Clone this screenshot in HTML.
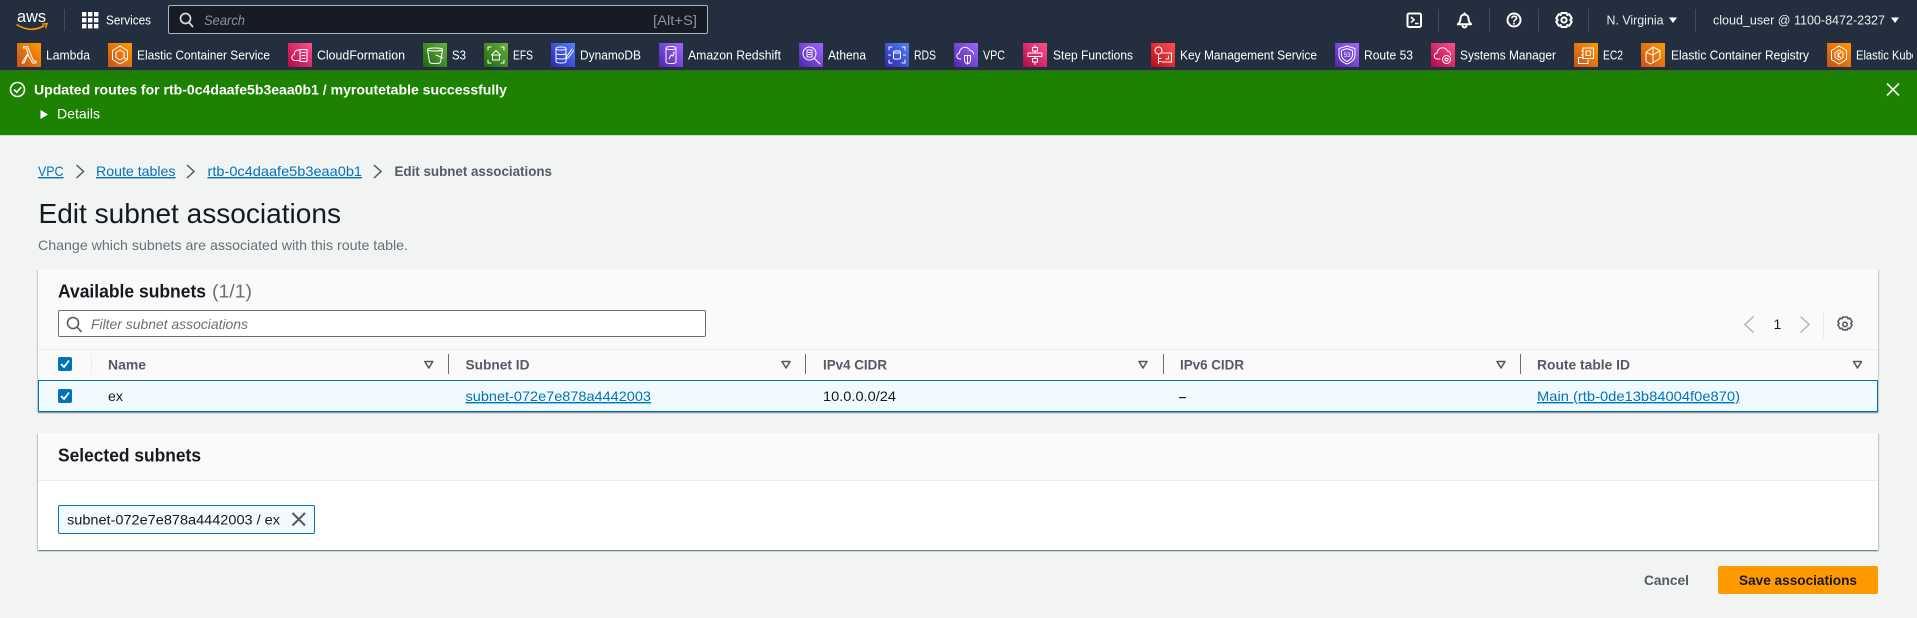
<!DOCTYPE html>
<html lang="en"><head><meta charset="utf-8"><title>Edit subnet associations</title>
<style>
html,body{margin:0;padding:0;width:1917px;height:618px;overflow:hidden;background:#f2f3f3}
body{position:relative;font-family:"Liberation Sans",sans-serif}
.b{position:absolute;box-sizing:border-box}
svg{position:absolute;left:0;top:0}
svg text{font-family:"Liberation Sans",sans-serif}
.n{fill:#fff;font-size:13px}
.s{fill:none;stroke:#fff;stroke-width:1;stroke-linejoin:round;stroke-linecap:round}
.l{fill:#0073bb;font-size:14px;text-decoration:underline}
.h{fill:#545b64;font-size:14px;font-weight:bold}
.t{fill:#16191f;font-size:14px}
.srt{fill:none;stroke:#545b64;stroke-width:1.6;stroke-linejoin:round}
.w{fill:none;stroke:#fff;stroke-width:2;stroke-linejoin:round;stroke-linecap:round}
</style></head><body>
<div class="b" style="left:0;top:0;width:1917px;height:70px;background:#232f3e"></div>
<div class="b" style="left:168px;top:5px;width:540px;height:29px;background:#161b25;border:1px solid #aab7b8;border-radius:2px"></div>
<div class="b" style="left:0;top:70px;width:1917px;height:65px;background:#1d8102;border-top:1px solid #3f5f2c"></div>
<div class="b" style="left:0;top:135px;width:1917px;height:1px;background:#d5dbdb"></div>

<div class="b" style="left:38px;top:269px;width:1840px;height:143px;background:#fafafa;box-shadow:0 1px 1px rgba(0,28,36,.3),1px 1px 1px rgba(0,28,36,.15),-1px 1px 1px rgba(0,28,36,.15)"></div>
<div class="b" style="left:38px;top:349px;width:1840px;height:1px;background:#eaeded"></div>
<div class="b" style="left:58px;top:310px;width:648px;height:27px;background:#fff;border:1px solid #687078;border-radius:2px"></div>
<div class="b" style="left:38px;top:380px;width:1840px;height:32px;background:#f1faff;border:1px solid #0073bb;border-top-width:1.5px;border-bottom-width:1.5px"></div>

<div class="b" style="left:38px;top:433px;width:1840px;height:117px;background:#fff;box-shadow:0 1px 1px rgba(0,28,36,.45),1px 1px 1px rgba(0,28,36,.15),-1px 1px 1px rgba(0,28,36,.15)"></div>
<div class="b" style="left:38px;top:433px;width:1840px;height:48px;background:#fafafa;border-bottom:1px solid #eaeded"></div>
<div class="b" style="left:58px;top:505px;width:257px;height:29px;background:#f1faff;border:1px solid #0073bb;border-radius:2px"></div>
<div class="b" style="left:1718px;top:566px;width:160px;height:28px;background:#ff9900;border-radius:2px"></div>

<svg width="1917" height="618" viewBox="0 0 1917 618" xmlns="http://www.w3.org/2000/svg">
<defs>
<linearGradient id="or" x1="0" y1="1" x2="1" y2="0"><stop offset="0" stop-color="#c8511b"/><stop offset="1" stop-color="#ff9900"/></linearGradient>
<linearGradient id="pk" x1="0" y1="1" x2="1" y2="0"><stop offset="0" stop-color="#b0084d"/><stop offset="1" stop-color="#ff4f8b"/></linearGradient>
<linearGradient id="gr" x1="0" y1="1" x2="1" y2="0"><stop offset="0" stop-color="#1b660f"/><stop offset="1" stop-color="#6cae3e"/></linearGradient>
<linearGradient id="bl" x1="0" y1="1" x2="1" y2="0"><stop offset="0" stop-color="#2e27ad"/><stop offset="1" stop-color="#527fff"/></linearGradient>
<linearGradient id="pu" x1="0" y1="1" x2="1" y2="0"><stop offset="0" stop-color="#4d27a8"/><stop offset="1" stop-color="#a166ff"/></linearGradient>
<linearGradient id="rd" x1="0" y1="1" x2="1" y2="0"><stop offset="0" stop-color="#bd0816"/><stop offset="1" stop-color="#ff5252"/></linearGradient>
</defs>

<!-- aws logo -->
<text x="17" y="22" fill="#fff" font-size="17" textLength="29" lengthAdjust="spacingAndGlyphs">aws</text>
<path d="M16.5 24.5Q31 33.5 44.5 25.5" fill="none" stroke="#f90" stroke-width="1.6"/>
<path d="M42 24.2l5-.6-1.4 4.6" fill="none" stroke="#f90" stroke-width="1.4"/>
<rect x="64" y="9" width="1" height="22" fill="#414d5c"/>
<!-- services grid -->
<g fill="#fff"><rect x="82" y="12" width="4.4" height="4.4"/><rect x="88" y="12" width="4.4" height="4.4"/><rect x="94" y="12" width="4.4" height="4.4"/><rect x="82" y="18" width="4.4" height="4.4"/><rect x="88" y="18" width="4.4" height="4.4"/><rect x="94" y="18" width="4.4" height="4.4"/><rect x="82" y="24" width="4.4" height="4.4"/><rect x="88" y="24" width="4.4" height="4.4"/><rect x="94" y="24" width="4.4" height="4.4"/></g>
<text x="106" y="24.5" class="n" textLength="45" lengthAdjust="spacingAndGlyphs">Services</text>
<!-- search -->
<circle cx="185.5" cy="18.5" r="5" fill="none" stroke="#d5dbdb" stroke-width="1.7"/><path d="M189 22.5l4 4.5" stroke="#d5dbdb" stroke-width="1.7"/>
<text x="204" y="25" fill="#879596" font-size="14" font-style="italic" textLength="41" lengthAdjust="spacingAndGlyphs">Search</text>
<text x="653" y="25" fill="#879596" font-size="14" textLength="44" lengthAdjust="spacingAndGlyphs">[Alt+S]</text>

<!-- right nav -->
<g fill="#414d5c"><rect x="1438" y="9" width="1" height="23"/><rect x="1489" y="8" width="1" height="24"/><rect x="1538" y="9" width="1" height="23"/><rect x="1588" y="9" width="1" height="23"/><rect x="1695" y="9" width="1" height="23"/></g>
<rect x="1407.500" y="13.500" width="13.500" height="13.500" rx="1.500" class="w"/><path d="M1411 17l3 2.800-3 2.800M1415 23.500h3.500" fill="none" stroke="#fff" stroke-width="1.600"/>
<path d="M1457.800 24.200c2-1.500 2.700-3 2.700-5.700a4 4 0 0 1 8 0c0 2.700.7 4.200 2.700 5.700z" class="w"/><path d="M1464.500 13.200v1M1462.500 25.500a2 2 0 0 0 4 0" class="w"/>
<circle cx="1514" cy="20" r="6.500" class="w"/><text x="1510.400" y="24.300" fill="#fff" font-size="12.500" font-weight="bold">?</text>
<path d="M1561.500 13h5l.8 2 2-.8 2.500 4.200-1.600 1.600 1.600 1.600-2.500 4.200-2-.8-.8 2h-5l-.8-2-2 .8-2.500-4.200 1.600-1.600-1.600-1.600 2.500-4.200 2 .8z" class="w" stroke-width="1.800"/><circle cx="1564" cy="20" r="2.600" class="w"/>
<text x="1606.500" y="24.500" class="n" textLength="57" lengthAdjust="spacingAndGlyphs" style="fill:#eaeded">N. Virginia</text>
<path d="M1669 17.500h8l-4 5.500z" fill="#fff"/>
<text x="1713" y="24.500" class="n" textLength="172" lengthAdjust="spacingAndGlyphs" style="fill:#eaeded">cloud_user @ 1100-8472-2327</text>
<path d="M1891 17.500h8l-4 5.500z" fill="#fff"/>

<!-- shortcut row -->
<g transform="translate(17,43)"><rect width="24" height="24" fill="url(#or)"/><path class="s" d="M5 20l6-10-2-5H6.500V3.500h4l6 14.500H19v2h-3.500L11 11.500 7 20z"/></g>
<text x="46" y="59.500" class="n" textLength="44" lengthAdjust="spacingAndGlyphs">Lambda</text>
<g transform="translate(108,43)"><rect width="24" height="24" fill="url(#or)"/><path class="s" d="M12 3l7.500 4.500v9L12 21l-7.500-4.500v-9zM12 7l4 2.500v5l-4 2.500-4-2.500v-5zM16 14.500l2.500 2"/></g>
<text x="137" y="59.500" class="n" textLength="133" lengthAdjust="spacingAndGlyphs">Elastic Container Service</text>
<g transform="translate(288,43)"><rect width="24" height="24" fill="url(#pk)"/><path class="s" d="M11 17.500H7a3 3 0 0 1-.5-6 4 4 0 0 1 5-4.500M12 6.500h7v12h-7zM14 9.500h3M14 12.500h3M14 15.500h3"/></g>
<text x="317" y="59.500" class="n" textLength="88" lengthAdjust="spacingAndGlyphs">CloudFormation</text>
<g transform="translate(423,43)"><rect width="24" height="24" fill="url(#gr)"/><path class="s" d="M4.500 6.500c0-2 15-2 15 0l-2 12.500c-.3 2-10.700 2-11 0zM4.500 6.500c0 2 15 2 15 0M13 12l7 3"/></g>
<text x="452" y="59.500" class="n" textLength="14" lengthAdjust="spacingAndGlyphs">S3</text>
<g transform="translate(484,43)"><rect width="24" height="24" fill="url(#gr)"/><path class="s" d="M4 7V4h3M17 4h3v3M20 17v3h-3M7 20H4v-3M7.500 12L12 7.500l4.500 4.500M8.500 12h7v5h-7z"/></g>
<text x="513" y="59.500" class="n" textLength="20" lengthAdjust="spacingAndGlyphs">EFS</text>
<g transform="translate(551,43)"><rect width="24" height="24" fill="url(#bl)"/><path class="s" d="M5 5.500c0-2 10-2 10 0v13c0 2-10 2-10 0zM5 5.500c0 2 10 2 10 0M5 10c0 2 10 2 10 0M5 14.500c0 2 10 2 10 0M21 6l-5 7-1 3 2.500-1.500 5-7"/></g>
<text x="580" y="59.500" class="n" textLength="61" lengthAdjust="spacingAndGlyphs">DynamoDB</text>
<g transform="translate(659,43)"><rect width="24" height="24" fill="url(#pu)"/><path class="s" d="M7 5c0-2 10-2 10 0v14c0 2-10 2-10 0zM7 5c0 2 10 2 10 0M10 16l2-4 2 1 1-4"/></g>
<text x="688" y="59.500" class="n" textLength="93" lengthAdjust="spacingAndGlyphs">Amazon Redshift</text>
<g transform="translate(799,43)"><rect width="24" height="24" fill="url(#pu)"/><circle class="s" cx="10.500" cy="10.500" r="6.500"/><path class="s" d="M15.500 15.500l5.500 5.500M8 7h5v7H8zM9.500 9.500h2M9.500 11.500h2"/></g>
<text x="828" y="59.500" class="n" textLength="38" lengthAdjust="spacingAndGlyphs">Athena</text>
<g transform="translate(885,43)"><rect width="24" height="24" fill="url(#bl)"/><path class="s" d="M4 7V4h3M17 4h3v3M20 17v3h-3M7 20H4v-3M8.500 9c0-1.500 7-1.500 7 0v6c0 1.500-7 1.500-7 0zM8.500 9c0 1.500 7 1.500 7 0M3.500 12h2M18.500 12h2"/></g>
<text x="914" y="59.500" class="n" textLength="22" lengthAdjust="spacingAndGlyphs">RDS</text>
<g transform="translate(954,43)"><rect width="24" height="24" fill="url(#pu)"/><path class="s" d="M7 16H6a3 3 0 0 1-.5-6A5.500 5.500 0 0 1 16 7.500a3.500 3.500 0 0 1 3.500 3.500M10.500 12.500h6v5c0 2-2 3-3 3.500-1-.5-3-1.500-3-3.500zM13.500 12.500v8"/></g>
<text x="983" y="59.500" class="n" textLength="22" lengthAdjust="spacingAndGlyphs">VPC</text>
<g transform="translate(1023,43)"><rect width="24" height="24" fill="url(#pk)"/><path class="s" d="M9.500 4.500h5v3.500h-5zM5 10h14v3.500H5zM9.500 15.500h5v3.500h-5zM12 8v2M12 13.500v2M12 2.500v2M12 19v2.500"/></g>
<text x="1053" y="59.500" class="n" textLength="80" lengthAdjust="spacingAndGlyphs">Step Functions</text>
<g transform="translate(1151,43)"><rect width="24" height="24" fill="url(#rd)"/><circle class="s" cx="7.500" cy="7.500" r="3.500"/><path class="s" d="M7.500 11v9.500M7.500 15.500H10M7.500 18.500H10M11.500 10h9v9H11M15 16h2.500v-3"/></g>
<text x="1180" y="59.500" class="n" textLength="137" lengthAdjust="spacingAndGlyphs">Key Management Service</text>
<g transform="translate(1335,43)"><rect width="24" height="24" fill="url(#pu)"/><path class="s" d="M12 3l8 2.500v6.500c0 4.500-4 7.500-8 9-4-1.500-8-4.500-8-9V5.500zM12 5.500l5.500 2v4.500c0 3-2.500 5-5.500 6.500-3-1.500-5.500-3.500-5.500-6.500V7.500z"/><text x="8.800" y="14.200" fill="#fff" font-size="6">53</text></g>
<text x="1364" y="59.500" class="n" textLength="49" lengthAdjust="spacingAndGlyphs">Route 53</text>
<g transform="translate(1431,43)"><rect width="24" height="24" fill="url(#pk)"/><path class="s" d="M9 16H6.500a3 3 0 0 1-.5-6A5.500 5.500 0 0 1 16.500 8a3.500 3.500 0 0 1 3 4"/><circle class="s" cx="15.500" cy="16.500" r="4"/><circle class="s" cx="15.500" cy="16.500" r="1.500"/></g>
<text x="1460" y="59.500" class="n" textLength="96" lengthAdjust="spacingAndGlyphs">Systems Manager</text>
<g transform="translate(1574,43)"><rect width="24" height="24" fill="url(#or)"/><path class="s" d="M9 14.500H4.500v6H14V17M9 5h10.500v10.500H9zM12 8h4.500v4.500H12zM7.500 8h1.500M7.500 12h1.500"/></g>
<text x="1603" y="59.500" class="n" textLength="20" lengthAdjust="spacingAndGlyphs">EC2</text>
<g transform="translate(1641,43)"><rect width="24" height="24" fill="url(#or)"/><path class="s" d="M12 4l7 3.500v8L9.500 21 5 18.500v-9zM12 4v8l-7-2.500M12 12l7-4.500M12 12v6.500"/></g>
<text x="1671" y="59.500" class="n" textLength="138" lengthAdjust="spacingAndGlyphs">Elastic Container Registry</text>
<g transform="translate(1827,43)"><rect width="24" height="24" fill="url(#or)"/><path class="s" d="M12 3l7.500 4.500v9L12 21l-7.500-4.500v-9zM12 7l4 2.500v5L12 17l-4-2.500v-5zM11 9.500v5M11 12l2.500-2.500M11 12l2.500 2.500"/></g>
<svg x="1856" y="45" width="57" height="22" viewBox="1856 45 57 22"><text x="1856" y="59.500" class="n" textLength="62" lengthAdjust="spacingAndGlyphs">Elastic Kube</text></svg>

<!-- flash -->
<circle cx="17.500" cy="89.500" r="7" fill="none" stroke="#fff" stroke-width="1.600"/><path d="M14 89.500l2.700 2.700 4.500-5" fill="none" stroke="#fff" stroke-width="1.600"/>
<text x="34" y="94.500" fill="#fff" font-size="14" font-weight="bold" textLength="473" lengthAdjust="spacingAndGlyphs">Updated routes for rtb-0c4daafe5b3eaa0b1 / myroutetable successfully</text>
<path d="M40.500 110l7.500 4.500-7.500 4.500z" fill="#fff"/>
<text x="57" y="118.500" fill="#fff" font-size="14" textLength="43" lengthAdjust="spacingAndGlyphs">Details</text>
<path d="M1887 83.500l12 12M1899 83.500l-12 12" stroke="#eaeded" stroke-width="1.700"/>

<!-- breadcrumbs -->
<text x="38" y="176" class="l" textLength="25.500" lengthAdjust="spacingAndGlyphs">VPC</text>
<path d="M76.500 165l7 6.500-7 6.500" fill="none" stroke="#545b64" stroke-width="1.500"/>
<text x="96" y="176" class="l" textLength="79.500" lengthAdjust="spacingAndGlyphs">Route tables</text>
<path d="M187 165l7 6.500-7 6.500" fill="none" stroke="#545b64" stroke-width="1.500"/>
<text x="207.500" y="176" class="l" textLength="154.500" lengthAdjust="spacingAndGlyphs">rtb-0c4daafe5b3eaa0b1</text>
<path d="M374 165l7 6.500-7 6.500" fill="none" stroke="#545b64" stroke-width="1.500"/>
<text x="394.500" y="176" class="h" textLength="157.500" lengthAdjust="spacingAndGlyphs">Edit subnet associations</text>
<text x="38.500" y="223" fill="#16191f" font-size="28" textLength="302.500" lengthAdjust="spacingAndGlyphs">Edit subnet associations</text>
<text x="38" y="250" fill="#687078" font-size="14" textLength="370" lengthAdjust="spacingAndGlyphs">Change which subnets are associated with this route table.</text>

<!-- table card -->
<text x="58" y="297.500" fill="#16191f" font-size="18" font-weight="bold" textLength="148" lengthAdjust="spacingAndGlyphs">Available subnets</text>
<text x="212" y="297.500" fill="#687078" font-size="18" textLength="40" lengthAdjust="spacingAndGlyphs">(1/1)</text>
<circle cx="73" cy="323" r="5.500" fill="none" stroke="#545b64" stroke-width="1.600"/><path d="M77 327l4.500 5" stroke="#545b64" stroke-width="1.600"/>
<text x="91" y="329" fill="#687078" font-size="14" font-style="italic" textLength="157" lengthAdjust="spacingAndGlyphs">Filter subnet associations</text>
<path d="M1753.500 316.500l-8.500 8 8.500 8" fill="none" stroke="#aab7b8" stroke-width="1.500"/>
<text x="1773.500" y="329" class="t">1</text>
<path d="M1800.500 316.500l8.500 8-8.500 8" fill="none" stroke="#aab7b8" stroke-width="1.500"/>
<rect x="1823" y="311" width="1" height="28" fill="#eaeded"/>
<path d="M1842.800 317h4.400l.8 1.700 1.900-.5 2.200 3.700-1.300 1.500 1.300 1.500-2.200 3.700-1.900-.5-.8 1.700h-4.400l-.8-1.700-1.900.5-2.200-3.700 1.300-1.500-1.300-1.500 2.200-3.700 1.900.5z" fill="none" stroke="#545b64" stroke-width="1.600" stroke-linejoin="round"/><circle cx="1845" cy="324.400" r="2.200" fill="none" stroke="#545b64" stroke-width="1.600"/>

<rect x="58" y="357" width="14" height="14" rx="2" fill="#0073bb"/><path d="M61 364l3 3 5-6.500" fill="none" stroke="#fff" stroke-width="1.800"/>
<rect x="91" y="354" width="1" height="20" fill="#eaeded"/>
<text x="108" y="369.500" class="h" textLength="38" lengthAdjust="spacingAndGlyphs">Name</text>
<path class="srt" d="M424.800 361.500h8l-4 6.500z"/><rect x="448" y="354" width="1" height="20" fill="#687078"/>
<text x="465.500" y="369.500" class="h" textLength="64" lengthAdjust="spacingAndGlyphs">Subnet ID</text>
<path class="srt" d="M782 361.500h8l-4 6.500z"/><rect x="805" y="354" width="1" height="20" fill="#687078"/>
<text x="823" y="369.500" class="h" textLength="64" lengthAdjust="spacingAndGlyphs">IPv4 CIDR</text>
<path class="srt" d="M1139 361.500h8l-4 6.500z"/><rect x="1163" y="354" width="1" height="20" fill="#687078"/>
<text x="1180" y="369.500" class="h" textLength="64" lengthAdjust="spacingAndGlyphs">IPv6 CIDR</text>
<path class="srt" d="M1497 361.500h8l-4 6.500z"/><rect x="1520" y="354" width="1" height="20" fill="#687078"/>
<text x="1537" y="369.500" class="h" textLength="93" lengthAdjust="spacingAndGlyphs">Route table ID</text>
<path class="srt" d="M1853.500 361.500h8l-4 6.500z"/>

<rect x="58" y="389" width="14" height="14" rx="2" fill="#0073bb"/><path d="M61 396l3 3 5-6.500" fill="none" stroke="#fff" stroke-width="1.800"/>
<text x="108" y="401" class="t" textLength="15" lengthAdjust="spacingAndGlyphs">ex</text>
<text x="465.500" y="401" class="l" textLength="185.500" lengthAdjust="spacingAndGlyphs">subnet-072e7e878a4442003</text>
<text x="823" y="401" class="t" textLength="73" lengthAdjust="spacingAndGlyphs">10.0.0.0/24</text>
<rect x="1179" y="397" width="7" height="1.200" fill="#16191f"/>
<text x="1537" y="401" class="l" textLength="203" lengthAdjust="spacingAndGlyphs">Main (rtb-0de13b84004f0e870)</text>

<!-- selected card -->
<text x="58" y="461.500" fill="#16191f" font-size="18" font-weight="bold" textLength="143" lengthAdjust="spacingAndGlyphs">Selected subnets</text>
<text x="67" y="524.500" class="t" textLength="213" lengthAdjust="spacingAndGlyphs">subnet-072e7e878a4442003 / ex</text>
<path d="M292.500 513l12.500 12.500M305 513l-12.500 12.500" stroke="#545b64" stroke-width="2"/>

<!-- footer -->
<text x="1644" y="585" class="h" textLength="45" lengthAdjust="spacingAndGlyphs">Cancel</text>
<text x="1739" y="585" fill="#16191f" font-size="14" font-weight="bold" textLength="118" lengthAdjust="spacingAndGlyphs">Save associations</text>
</svg>
</body></html>
